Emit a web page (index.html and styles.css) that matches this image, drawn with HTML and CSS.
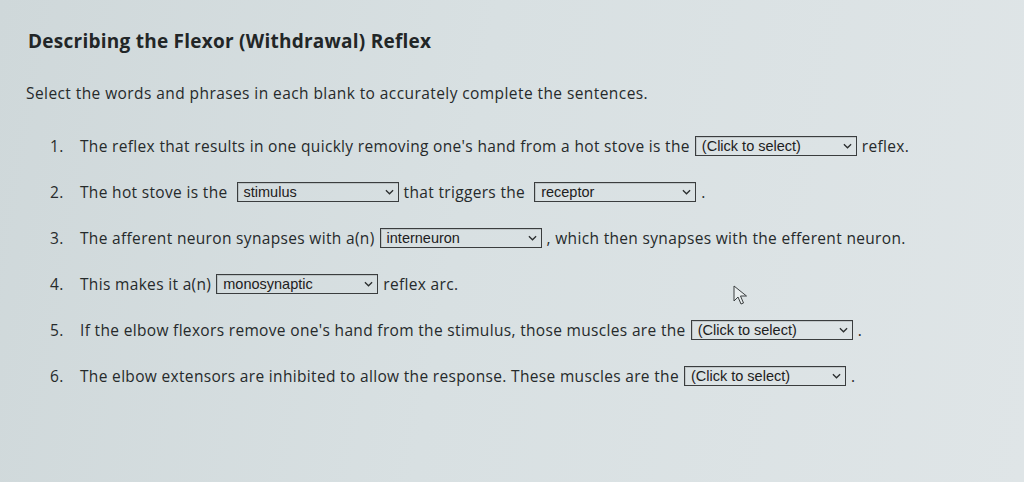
FILE: index.html
```html
<!DOCTYPE html>
<html lang="en">
<head>
<meta charset="utf-8">
<title>Describing the Flexor (Withdrawal) Reflex</title>
<link rel="stylesheet" href="styles.css">
</head>
<body>
<main class="page">
  <h1 class="title">Describing the Flexor (Withdrawal) Reflex</h1>
  <p class="intro">Select the words and phrases in each blank to accurately complete the sentences.</p>
  <ol class="items">
    <li class="item">
      <span class="num">1.</span>
      <span class="txt">The reflex that results in one quickly removing one's hand from a hot stove is the</span>
      <span class="pick"><span class="val">(Click to select)</span><svg class="chev" viewBox="0 0 10 6"><path d="M1 1l4 4 4-4"/></svg></span>
      <span class="txt">reflex.</span>
    </li>
    <li class="item">
      <span class="num">2.</span>
      <span class="txt">The hot stove is the</span>
      <span class="pick wide-gap"><span class="val">stimulus</span><svg class="chev" viewBox="0 0 10 6"><path d="M1 1l4 4 4-4"/></svg></span>
      <span class="txt">that triggers the</span>
      <span class="pick wide-gap"><span class="val">receptor</span><svg class="chev" viewBox="0 0 10 6"><path d="M1 1l4 4 4-4"/></svg></span>
      <span class="txt">.</span>
    </li>
    <li class="item">
      <span class="num">3.</span>
      <span class="txt">The afferent neuron synapses with a(n)</span>
      <span class="pick"><span class="val">interneuron</span><svg class="chev" viewBox="0 0 10 6"><path d="M1 1l4 4 4-4"/></svg></span>
      <span class="txt">, which then synapses with the efferent neuron.</span>
    </li>
    <li class="item">
      <span class="num">4.</span>
      <span class="txt">This makes it a(n)</span>
      <span class="pick"><span class="val">monosynaptic</span><svg class="chev" viewBox="0 0 10 6"><path d="M1 1l4 4 4-4"/></svg></span>
      <span class="txt">reflex arc.</span>
    </li>
    <li class="item">
      <span class="num">5.</span>
      <span class="txt">If the elbow flexors remove one's hand from the stimulus, those muscles are the</span>
      <span class="pick"><span class="val">(Click to select)</span><svg class="chev" viewBox="0 0 10 6"><path d="M1 1l4 4 4-4"/></svg></span>
      <span class="txt">.</span>
    </li>
    <li class="item">
      <span class="num">6.</span>
      <span class="txt">The elbow extensors are inhibited to allow the response. These muscles are the</span>
      <span class="pick"><span class="val">(Click to select)</span><svg class="chev" viewBox="0 0 10 6"><path d="M1 1l4 4 4-4"/></svg></span>
      <span class="txt">.</span>
    </li>
  </ol>
  <svg class="cursor" viewBox="0 0 14 20"><path d="M1 1v15l4-4 3 7 2.5-1-3-7h6z"/></svg>
</main>
</body>
</html>
```
FILE: styles.css
```css
html, body {
  margin: 0;
  height: 100%;
}

body {
  background: linear-gradient(100deg, #cfd8da 0%, #d8e0e2 45%, #dfe5e7 100%);
  color: #262a2b;
  font-family: "Open Sans", "Liberation Sans", sans-serif;
  overflow: hidden;
}

.page {
  position: relative;
  padding: 29px 0 0 28px;
}

.title {
  margin: 0;
  font-size: 19px;
  font-weight: 700;
  line-height: 24px;
  letter-spacing: 0.25px;
  color: #222627;
}

.intro {
  margin: 30px 0 0 -2px;
  font-size: 15.5px;
  line-height: 20px;
  letter-spacing: 0.42px;
}

.items {
  list-style: none;
  margin: 32px 0 0 22px;
  padding: 0;
  display: flex;
  flex-direction: column;
  gap: 25px;
}

.item {
  display: flex;
  align-items: center;
  height: 21px;
  font-size: 15.5px;
  letter-spacing: 0.33px;
  white-space: nowrap;
}

.num {
  width: 30px;
  flex: none;
}

.txt {
  flex: none;
}

.pick {
  flex: none;
  display: flex;
  align-items: center;
  justify-content: space-between;
  box-sizing: border-box;
  width: 162px;
  height: 20px;
  margin: 0 5px;
  padding: 0 4px 0 6px;
  border: 1px solid #3a3d3e;
  box-shadow: inset 1px 1px 0 rgba(0, 0, 0, 0.12);
  font-family: "Liberation Sans", Arial, sans-serif;
  font-size: 14.5px;
  letter-spacing: 0;
  color: #1d2021;
}

.pick.wide-gap {
  margin-left: 9px;
}

.chev {
  width: 9px;
  height: 6px;
  fill: none;
  stroke: #2a2d2e;
  stroke-width: 1.4;
}

.cursor {
  position: absolute;
  left: 733px;
  top: 285px;
  width: 14px;
  height: 20px;
  fill: #e9eeef;
  stroke: #3b3f40;
  stroke-width: 1;
  stroke-linejoin: round;
}
```
